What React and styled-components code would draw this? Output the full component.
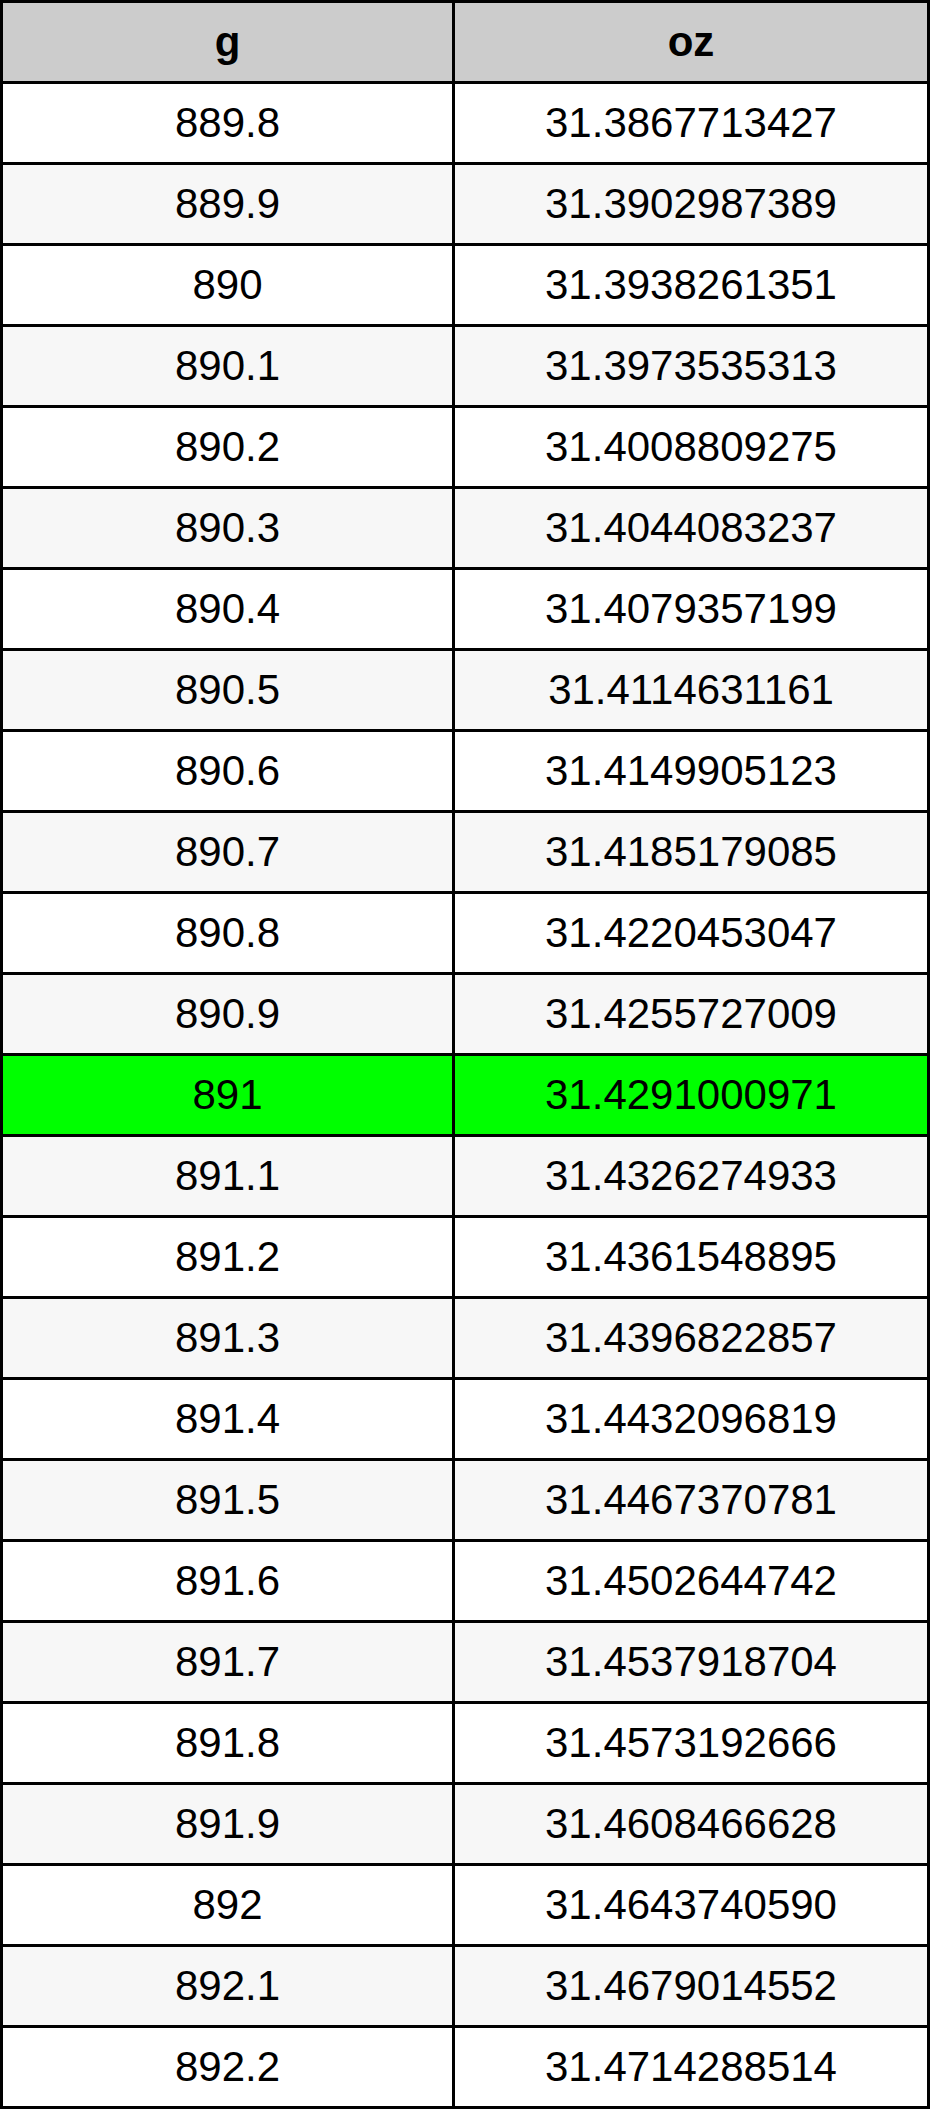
import React from 'react';
import styled, { createGlobalStyle } from 'styled-components';

const GlobalStyle = createGlobalStyle`
  html, body {
    margin: 0;
    padding: 0;
    background: #ffffff;
  }
`;

const Table = styled.div`
  display: grid;
  grid-template-columns: 449px 472px;
  grid-auto-rows: 78px;
  gap: 3px;
  padding: 3px;
  width: 930px;
  box-sizing: border-box;
  background: #000000;
  font-family: 'Liberation Sans', Arial, sans-serif;
`;

const Cell = styled.div`
  display: flex;
  align-items: center;
  justify-content: center;
  font-size: 42px;
  color: #000000;
  font-weight: ${(p) => (p.$head ? 'bold' : 'normal')};
  background: ${(p) => {
    if (p.$head) return '#cccccc';
    if (p.$active) return '#00ff00';
    return p.$odd ? '#f7f7f7' : '#ffffff';
  }};
`;

const rows = [
  ['889.8', '31.3867713427'],
  ['889.9', '31.3902987389'],
  ['890', '31.3938261351'],
  ['890.1', '31.3973535313'],
  ['890.2', '31.4008809275'],
  ['890.3', '31.4044083237'],
  ['890.4', '31.4079357199'],
  ['890.5', '31.4114631161'],
  ['890.6', '31.4149905123'],
  ['890.7', '31.4185179085'],
  ['890.8', '31.4220453047'],
  ['890.9', '31.4255727009'],
  ['891', '31.4291000971'],
  ['891.1', '31.4326274933'],
  ['891.2', '31.4361548895'],
  ['891.3', '31.4396822857'],
  ['891.4', '31.4432096819'],
  ['891.5', '31.4467370781'],
  ['891.6', '31.4502644742'],
  ['891.7', '31.4537918704'],
  ['891.8', '31.4573192666'],
  ['891.9', '31.4608466628'],
  ['892', '31.4643740590'],
  ['892.1', '31.4679014552'],
  ['892.2', '31.4714288514'],
];

export default function App() {
  return (
    <>
      <GlobalStyle />
      <Table>
        <Cell $head>g</Cell>
        <Cell $head>oz</Cell>
        {rows.map(([g, oz], i) => (
          <React.Fragment key={g}>
            <Cell $odd={i % 2 === 1} $active={g === '891'}>{g}</Cell>
            <Cell $odd={i % 2 === 1} $active={g === '891'}>{oz}</Cell>
          </React.Fragment>
        ))}
      </Table>
    </>
  );
}
